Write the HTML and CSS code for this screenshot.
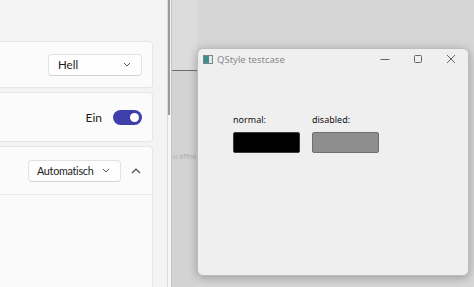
FILE: index.html
```html
<!DOCTYPE html>
<html>
<head>
<meta charset="utf-8">
<link rel="stylesheet" href="styles.css">
</head>
<body>
<div class="screen">
  <div class="settings">
    <div class="column">
      <div class="card">
        <div class="dropdown wide"><span>Hell</span><svg class="chev" width="8" height="5" viewBox="0 0 8 5"><path d="M1 1 L4 4 L7 1" fill="none" stroke="#555" stroke-width="1"/></svg></div>
      </div>
      <div class="card tall">
        <span class="label">Ein</span>
        <div class="toggle"><div class="knob"></div></div>
      </div>
      <div class="card expander">
        <div class="expander-head">
          <div class="dropdown auto"><span>Automatisch</span><svg class="chev" width="8" height="5" viewBox="0 0 8 5"><path d="M1 1 L4 4 L7 1" fill="none" stroke="#555" stroke-width="1"/></svg></div>
          <svg class="up" width="10" height="6" viewBox="0 0 10 6"><path d="M1 5 L5 1 L9 5" fill="none" stroke="#444" stroke-width="1.1"/></svg>
        </div>
        <div class="expander-body"></div>
      </div>
    </div>
    <div class="scroll"><div class="thumb"></div></div>
  </div>
  <div class="desktop">
    <div class="strip"><div class="strip-top"></div><div class="strip-bottom"><span class="ghost">u öffne</span></div></div>
    <div class="window">
      <div class="titlebar">
        <div class="appicon"><div class="appicon-fill"></div></div>
        <span class="title">QStyle testcase</span>
        <div class="controls">
          <svg width="10" height="10" viewBox="0 0 10 10"><path d="M0.5 5.5 H9.5" stroke="#666" stroke-width="1"/></svg>
          <svg width="10" height="10" viewBox="0 0 10 10"><rect x="1.5" y="1.5" width="7" height="7" rx="1" fill="none" stroke="#666" stroke-width="1"/></svg>
          <svg width="10" height="10" viewBox="0 0 10 10"><path d="M1 1 L9 9 M9 1 L1 9" stroke="#666" stroke-width="1"/></svg>
        </div>
      </div>
      <div class="content">
        <div class="group">
          <span class="cap">normal:</span>
          <div class="swatch normal"></div>
        </div>
        <div class="group">
          <span class="cap">disabled:</span>
          <div class="swatch disabled"></div>
        </div>
      </div>
    </div>
  </div>
</div>
</body>
</html>
```

FILE: styles.css
```css
* { box-sizing: border-box; }
html, body { margin: 0; padding: 0; }
body {
  width: 474px;
  height: 287px;
  overflow: hidden;
  font-family: "Noto Sans", "Open Sans", sans-serif;
}
.screen {
  display: flex;
  width: 474px;
  height: 287px;
}
.settings {
  display: flex;
  width: 171px;
  height: 287px;
  background: #f3f3f3;
  font-family: Lato, "Noto Sans", sans-serif;
}
.column {
  width: 167px;
  padding: 41px 14px 0 0;
  display: flex;
  flex-direction: column;
  gap: 4px;
}
.card {
  height: 47px;
  background: #fbfbfb;
  border: 1px solid #e6e6e6;
  border-left: none;
  border-radius: 0 4px 4px 0;
  display: flex;
  align-items: center;
  justify-content: flex-end;
  padding-right: 10px;
}
.card.tall { height: 50px; gap: 11px; }
.label { font-size: 12px; color: #1b1b1b; }
.dropdown {
  height: 22px;
  background: #fefefe;
  border: 1px solid #e2e2e2;
  border-bottom-color: #d2d2d2;
  border-radius: 4px;
  display: flex;
  align-items: center;
  justify-content: space-between;
  padding: 0 10px 0 9px;
  font-size: 11.5px;
  color: #1b1b1b;
}
.dropdown.wide { width: 94px; }
.dropdown.auto { width: 93px; padding-left: 8px; font-size: 10.8px; letter-spacing: -0.3px; }
.chev { display: block; }
.toggle {
  width: 29px;
  height: 15px;
  border-radius: 8px;
  background: #3e3fac;
  display: flex;
  align-items: center;
  justify-content: flex-end;
  padding-right: 3px;
}
.knob { width: 9px; height: 9px; border-radius: 50%; background: #fff; }
.card.expander {
  flex: 1;
  height: auto;
  flex-direction: column;
  align-items: stretch;
  padding: 0;
  border-bottom: none;
  border-radius: 0 4px 0 0;
}
.expander-head {
  height: 48px;
  display: flex;
  align-items: center;
  justify-content: flex-end;
  padding-right: 11px;
  gap: 10px;
  border-bottom: 1px solid #e9e9e9;
}
.expander-head .up { display: block; }
.expander-body { flex: 1; background: #fafafa; }
.scroll {
  width: 4px;
  background: #f6f6f6;
  border-left: 1px solid #dcdcdc;
}
.thumb { width: 2px; height: 115px; background: #9a9a9a; margin-left: 0; }
.desktop {
  flex: 1;
  position: relative;
  background: #d6d6d6;
}
.strip {
  width: 26px;
  height: 287px;
  display: flex;
  flex-direction: column;
  border-left: 1px solid #c4c4c4;
}
.strip-top { height: 71px; background: #dcdcdc; border-bottom: 1px solid #6f6f6f; }
.strip-bottom { flex: 1; background: #d3d3d3; padding-top: 81px; }
.ghost { font-size: 7px; color: #b0b0b0; white-space: nowrap; margin-left: 1px; display: block; }
.window {
  position: absolute;
  left: 26px;
  top: 48px;
  width: 272px;
  height: 228px;
  background: #efefef;
  border: 1px solid #bdbdbd;
  border-radius: 6px;
  box-shadow: 0 2px 10px rgba(0,0,0,0.28);
  display: flex;
  flex-direction: column;
}
.titlebar {
  height: 18px;
  margin-top: 1px;
  display: flex;
  align-items: center;
  padding-left: 5px;
}
.appicon {
  width: 10px;
  height: 9px;
  border: 1px solid #6f8a8a;
  background: #e6e6e6;
  margin-right: 4px;
}
.appicon-fill { width: 5px; height: 7px; background: #3f8f86; }
.title { font-size: 9.5px; color: #8a8a8a; }
.controls {
  margin-left: auto;
  display: flex;
  gap: 23px;
  padding-right: 12px;
  align-items: center;
}
.controls svg { display: block; }
.content {
  display: flex;
  gap: 12px;
  padding: 47px 0 0 35px;
}
.group { display: flex; flex-direction: column; gap: 7px; }
.cap { font-size: 9px; color: #111; line-height: 10px; }
.swatch { width: 67px; height: 21px; border-radius: 2px; }
.swatch.normal { background: #000; border: 1px solid #3a3a3a; }
.swatch.disabled { background: #8e8e8e; border: 1px solid #6f6f6f; }
```
